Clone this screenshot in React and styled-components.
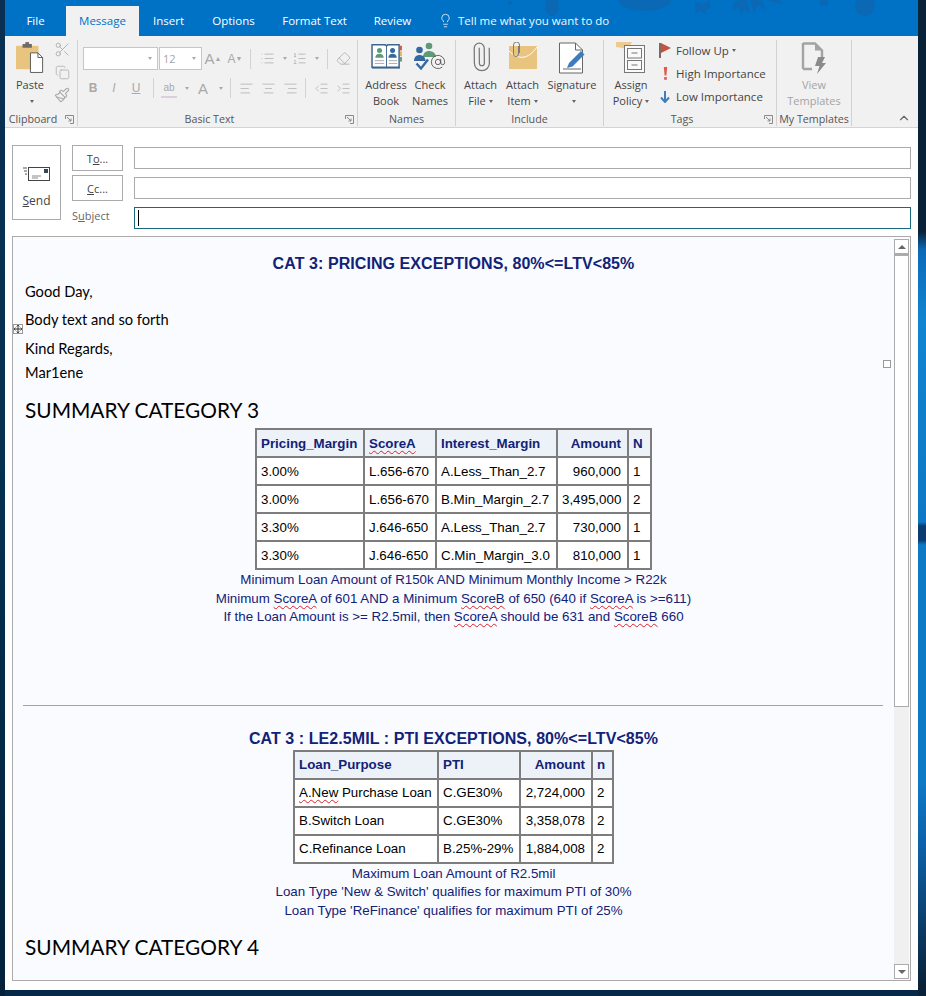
import React from 'react';
import styled, { createGlobalStyle } from 'styled-components';
import {
  AlignCenter, AlignLeft, AlignRight, AtSign, ChevronUp, Copy, Eraser, IndentDecrease,
  IndentIncrease, Lightbulb, List, ListOrdered, Paintbrush, Paperclip, Scissors,
} from 'lucide-react';

const GlobalStyle = createGlobalStyle`
  html, body { margin: 0; padding: 0; background: #06294a; }
`;

const UI_FONT = '"Open Sans", "Noto Sans", sans-serif';
const SAS_FONT = '"Liberation Sans", Arial, sans-serif';
const NAVY = '#112277';

const Screen = styled.div`
  display: flex;
  width: 926px;
  height: 996px;
  overflow: hidden;
  font-family: ${UI_FONT};
  background: #06294a;
`;

const LeftEdge = styled.div`
  width: 5px;
  background: linear-gradient(180deg, #0a2f52 0%, #04304f 50%, #03213b 100%);
`;

const RightEdge = styled.div`
  flex: 1;
  background: linear-gradient(
    180deg,
    #0a2238 0,
    #0a2238 232px,
    #0c6ab8 250px,
    #1185d0 320px,
    #0f78c4 522px,
    #0a3c70 526px,
    #0a3c70 540px,
    #0e7ac6 545px,
    #0e7ac6 780px,
    #0d5fa5 850px,
    #0a2238 985px
  );
`;

const Main = styled.div`
  width: 913px;
  height: 990px;
  display: flex;
  flex-direction: column;
  background: #fff;
`;

const TitleBar = styled.div`
  position: relative;
  height: 36px;
  display: flex;
  align-items: flex-end;
  background: #0072c6;
  overflow: hidden;
`;

const Doodles = styled.svg`
  position: absolute;
  left: 0;
  top: 0;
`;

const Tab = styled.div`
  position: relative;
  width: ${p => p.$w}px;
  height: 30px;
  box-sizing: border-box;
  padding-bottom: 2px;
  display: flex;
  align-items: center;
  justify-content: center;
  font-size: 11.5px;
  color: ${p => (p.$active ? '#0072c6' : '#fff')};
  background: ${p => (p.$active ? '#f1f1f1' : 'transparent')};
`;

const TellMe = styled.div`
  position: relative;
  height: 30px;
  box-sizing: border-box;
  padding-bottom: 2px;
  margin-left: 13px;
  display: flex;
  align-items: center;
  gap: 5px;
  font-size: 11.5px;
  color: #f0f8fe;
`;

const Ribbon = styled.div`
  height: 92px;
  box-sizing: border-box;
  display: flex;
  background: #f1f1f1;
  border-bottom: 1px solid #d4d4d4;
`;

const Group = styled.div`
  position: relative;
  width: ${p => p.$w}px;
  box-sizing: border-box;
  margin: 4px 0 1px;
  display: flex;
  flex-direction: column;
  border-right: 1px solid #d2d2d2;
`;

const GroupBody = styled.div`
  flex: 1;
  min-height: 0;
  display: flex;
  padding-left: ${p => p.$pl || 0}px;
`;

const GroupLabel = styled.div`
  height: 13px;
  padding-right: ${p => (p.$launcher ? 16 : 0)}px;
  text-align: center;
  font-size: 10.7px;
  line-height: 13px;
  color: #555;
`;

const Launcher = styled.svg`
  position: absolute;
  right: 3px;
  bottom: 2px;
`;

const BigButton = styled.div`
  width: ${p => p.$w}px;
  display: flex;
  flex-direction: column;
  align-items: center;
  text-align: center;
  font-size: 11px;
  line-height: 16px;
  color: ${p => (p.$muted ? '#a4a4a4' : '#444')};
`;

const BigIcon = styled.div`
  height: 37px;
  box-sizing: border-box;
  padding-top: 2px;
  display: flex;
  align-items: flex-start;
  justify-content: center;
`;

const Caret = styled.span`
  display: inline-block;
  width: 0;
  height: 0;
  margin-left: 3px;
  vertical-align: 2px;
  border-left: 2.5px solid transparent;
  border-right: 2.5px solid transparent;
  border-top: 3px solid ${p => p.$color || '#666'};
`;

const SmallStack = styled.div`
  width: 14px;
  padding-top: 1px;
  display: flex;
  flex-direction: column;
  align-items: center;
  gap: 7px;
  color: #a9a9a9;
`;

const ToolRows = styled.div`
  padding-top: 7px;
  display: flex;
  flex-direction: column;
  gap: 7px;
`;

const ToolRow = styled.div`
  display: flex;
  align-items: center;
  height: ${p => p.$h || 22}px;
`;

const Combo = styled.div`
  width: ${p => p.$w}px;
  height: 23px;
  margin-left: ${p => p.$ml || 0}px;
  box-sizing: border-box;
  padding: 0 5px 0 3px;
  display: flex;
  align-items: center;
  justify-content: space-between;
  background: #fff;
  border: 1px solid #c6c6c6;
  font-size: 11px;
  color: #a6a6a6;
`;

const Tool = styled.div`
  width: ${p => p.$w}px;
  height: 20px;
  box-sizing: border-box;
  display: flex;
  align-items: center;
  justify-content: center;
  color: ${p => p.$color || '#a9a9a9'};
  font-family: ${SAS_FONT};
  font-size: ${p => p.$fs || 12}px;
  font-weight: ${p => (p.$bold ? 700 : 400)};
  font-style: ${p => (p.$italic ? 'italic' : 'normal')};
  text-decoration: ${p => (p.$under ? 'underline' : 'none')};
  border-bottom: ${p => (p.$bar ? `2px solid ${p.$bar}` : 'none')};
`;

const ToolSep = styled.div`
  width: 1px;
  height: 20px;
  margin: 0 ${p => p.$mr}px 0 ${p => p.$ml}px;
  background: #d2d2d2;
`;

const TagList = styled.div`
  margin-top: -1px;
  display: flex;
  flex-direction: column;
`;

const TagRow = styled.div`
  height: 23px;
  display: flex;
  align-items: center;
  font-size: 11.5px;
  color: #444;
`;

const TagIcon = styled.div`
  width: 22px;
  display: flex;
  justify-content: center;
`;

const CheckIconWrap = styled.div`
  position: relative;
  display: flex;
`;

const AtMark = styled(AtSign)`
  position: absolute;
  right: 0;
  bottom: 3px;
  color: #555;
`;

const TiltedClip = styled(Paperclip)`
  color: #777;
  transform: rotate(-45deg);
`;

const TinyArrow = styled.sup`
  font-size: 7px;
`;

const Collapse = styled.div`
  flex: 1;
  display: flex;
  align-items: flex-end;
  justify-content: flex-end;
  padding: 0 7px 2px 0;
  color: #666;
`;

const Compose = styled.div`
  flex: 1;
  min-height: 0;
  display: flex;
  flex-direction: column;
  padding: 17px 7px 9px 7px;
`;

const Header = styled.div`
  display: grid;
  grid-template-columns: 49px 51px 1fr;
  grid-template-rows: repeat(3, 26px);
  column-gap: 11px;
  row-gap: 4px;
  height: 86px;
`;

const SendButton = styled.div`
  grid-row: 1 / 4;
  height: 75px;
  box-sizing: border-box;
  border: 1px solid #ababab;
  display: flex;
  flex-direction: column;
  align-items: center;
  padding-top: 20px;
  gap: 11px;
  font-size: 12px;
  color: #444;
`;

const AddressButton = styled.div`
  box-sizing: border-box;
  border: 1px solid #ababab;
  display: flex;
  align-items: center;
  justify-content: center;
  font-size: 11px;
  color: #444;
`;

const SubjectLabel = styled.div`
  display: flex;
  align-items: center;
  padding-bottom: 5px;
  font-size: 11px;
  color: #666;
`;

const Field = styled.div`
  height: 22px;
  align-self: center;
  box-sizing: border-box;
  display: flex;
  align-items: center;
  padding-left: 3px;
  background: #fff;
  border: 1px solid ${p => (p.$focus ? '#17697f' : '#ababab')};
`;

const TextCaret = styled.div`
  width: 1px;
  height: 16px;
  background: #000;
`;

const Body = styled.div`
  position: relative;
  flex: 1;
  min-height: 0;
  margin-top: 5px;
  display: flex;
  overflow: hidden;
  background: #fafbff;
  border: 1px solid #ababab;
`;

const Content = styled.div`
  flex: 1;
  min-width: 0;
  padding: 17px 0 0;
`;

const ReportTitle = styled.div`
  text-align: center;
  font-family: ${SAS_FONT};
  font-size: 16px;
  font-weight: 700;
  line-height: 20px;
  letter-spacing: 0.07px;
  color: ${NAVY};
`;

const Para = styled.div`
  margin: ${p => p.$mt}px 0 0 12px;
  font-family: Lato, "Open Sans", sans-serif;
  font-size: 14.67px;
  line-height: 20px;
  color: #000;
`;

const SummaryHeading = styled.div`
  margin: ${p => p.$mt}px 0 0 12px;
  font-family: Lato, "Open Sans", sans-serif;
  font-size: 20.85px;
  line-height: 30px;
  color: #000;
`;

const Report = styled.table`
  width: ${p => p.$w}px;
  margin: ${p => p.$mt}px auto 0;
  table-layout: fixed;
  border-collapse: collapse;
  font-family: ${SAS_FONT};
  font-size: 13.33px;
  background: #fff;
`;

const HeadCell = styled.th`
  width: ${p => p.$w}px;
  height: 28px;
  box-sizing: border-box;
  padding: 0 6px 0 4px;
  border: 2px solid #7d7d7d;
  background: #edf2f9;
  color: ${NAVY};
  font-weight: 700;
  text-align: ${p => (p.$right ? 'right' : 'left')};
  white-space: nowrap;
`;

const DataCell = styled.td`
  height: 28px;
  box-sizing: border-box;
  padding: 0 6px 0 4px;
  border: 2px solid #7d7d7d;
  color: #000;
  text-align: ${p => (p.$right ? 'right' : 'left')};
  white-space: nowrap;
`;

const Notes = styled.div`
  margin-top: 1px;
  text-align: center;
  font-family: ${SAS_FONT};
  font-size: 13.33px;
  line-height: 18.5px;
  color: ${NAVY};
`;

const Spell = styled.span`
  text-decoration: underline wavy #d9222a 1px;
  text-underline-offset: 2px;
`;

const Rule = styled.div`
  height: 1px;
  margin: 78px 11px 23px 10px;
  background: #a3a3ad;
`;

const MoveHandle = styled.div`
  position: absolute;
  left: 0;
  top: 87px;
  width: 10px;
  height: 10px;
  box-sizing: border-box;
  display: flex;
  align-items: center;
  justify-content: center;
  background: #fff;
  border: 1px solid #9a9a9a;
`;

const ResizeHandle = styled.div`
  position: absolute;
  left: 870px;
  top: 123px;
  width: 8px;
  height: 8px;
  box-sizing: border-box;
  background: #fff;
  border: 1px solid #9a9a9a;
`;

const Scroller = styled.div`
  width: 15px;
  margin: 2px 1px 1px 0;
  display: flex;
  flex-direction: column;
  background: #f0f0f0;
`;

const ScrollButton = styled.div`
  height: 15px;
  box-sizing: border-box;
  display: flex;
  align-items: center;
  justify-content: center;
  background: #fff;
  border: 1px solid #ababab;
`;

const ScrollThumb = styled.div`
  height: 453px;
  box-sizing: border-box;
  background: #fff;
  border: 1px solid #ababab;
  border-top-width: 2px;
`;

const ScrollTrack = styled.div`
  flex: 1;
`;

const Arrow = styled.div`
  width: 0;
  height: 0;
  border-left: 4px solid transparent;
  border-right: 4px solid transparent;
  ${p => (p.$down ? 'border-top: 4px solid #666;' : 'border-bottom: 4px solid #666;')}
`;

const PasteIcon = () => (
  <svg width="28" height="32" viewBox="0 0 30 34">
    <rect x="0" y="4" width="24" height="25" fill="#e8c47f" />
    <rect x="7" y="2" width="10" height="4" fill="#6f6a66" />
    <rect x="10" y="0" width="4" height="3" fill="#6f6a66" />
    <path d="M15.5 11.5h8l5 5v16h-13z" fill="#fff" stroke="#555" />
    <path d="M23.5 11.5v5h5" fill="none" stroke="#555" />
  </svg>
);

const AddressBookIcon = () => (
  <svg width="33" height="28" viewBox="0 0 33 30">
    <path d="M1 3h14l1.500 1 1.500-1h12v24H1z" fill="#fff" stroke="#3f668f" strokeWidth="1.600" />
    <path d="M1 27h30v1.500H1z" fill="#3f668f" />
    <path d="M16.500 4v23" stroke="#3f668f" />
    <circle cx="9" cy="9" r="2.700" fill="#5e9a78" />
    <path d="M4.500 17c0-3 2-4.500 4.500-4.500s4.500 1.500 4.500 4.500z" fill="#5e9a78" />
    <circle cx="23" cy="9" r="2.700" fill="#34689f" />
    <path d="M18.500 17c0-3 2-4.500 4.500-4.500s4.500 1.500 4.500 4.500z" fill="#34689f" />
    <path d="M4 20h10M4 23h10M19 20h9M19 23h9" stroke="#a7a7a7" />
    <rect x="31" y="4" width="2" height="5" fill="#c9574a" />
    <rect x="31" y="10" width="2" height="5" fill="#e3b457" />
    <rect x="31" y="16" width="2" height="5" fill="#5e9a78" />
  </svg>
);

const CheckNamesIcon = () => (
  <svg width="32" height="31" viewBox="0 0 32 31">
    <circle cx="15" cy="4" r="3.300" fill="#5e9a78" />
    <path d="M9 15c0-4 3-6 6-6s7 2 7 6z" fill="#5e9a78" />
    <circle cx="5.500" cy="8" r="3.300" fill="#34689f" />
    <path d="M0 19c0-4 2.500-6 5.500-6s6 2 6 6z" fill="#34689f" />
    <path d="M2.500 21.500l4.500 5 7-9" fill="none" stroke="#34689f" strokeWidth="2.400" />
  </svg>
);

const EnvelopeClipIcon = () => (
  <svg width="30" height="28" viewBox="0 0 30 28">
    <rect x="1" y="4" width="28" height="23" fill="#e8c47f" />
    <path d="M1 9c9 9 19 9 28-4" fill="none" stroke="#fff" strokeWidth="1" />
    <path d="M9.500 4v8a2.500 2.500 0 0 1-5 0V3a3 3 0 0 1 6 0v8" fill="none" stroke="#7b7b7b" transform="translate(1 0)" />
  </svg>
);

const SignatureIcon = () => (
  <svg width="30" height="32" viewBox="0 0 30 32">
    <path d="M2.500 1h16l7 7v23h-23z" fill="#fff" stroke="#666" />
    <path d="M18.500 1v7h7" fill="none" stroke="#666" />
    <path d="M6 27h18" stroke="#666" />
    <path d="M10 26l2-5L24 9l3.500 3.500-12 12z" fill="#3f7cbd" />
  </svg>
);

const CabinetIcon = () => (
  <svg width="30" height="32" viewBox="0 0 30 32">
    <path d="M0 0h16l-4 7-12-2z" fill="#ebcb8f" />
    <rect x="8.500" y="3.500" width="20" height="27" fill="#fafafa" stroke="#777" />
    <rect x="11.500" y="6.500" width="14" height="9.500" fill="none" stroke="#777" />
    <rect x="11.500" y="18.500" width="14" height="9" fill="none" stroke="#777" />
    <path d="M15.500 11h6M15.500 23h6" stroke="#777" />
  </svg>
);

const TemplatesIcon = () => (
  <svg width="26" height="32" viewBox="0 0 26 32">
    <path d="M2 1.500h12l7 7v7M11 27H2z" fill="none" stroke="#a3a3a3" strokeWidth="2.400" />
    <path d="M2 1v26" stroke="#a3a3a3" strokeWidth="2.400" />
    <path d="M14 1.500v7h7z" fill="#a3a3a3" />
    <path d="M17 15h7l-3 6h4l-9 11 2.500-8H14z" fill="#8a8a8a" />
  </svg>
);

const SendIcon = () => (
  <svg width="28" height="15" viewBox="0 0 28 15">
    <rect x="5.500" y="1.500" width="21" height="13" fill="#fff" stroke="#444" />
    <rect x="21" y="3" width="4" height="4" fill="#33475b" />
    <path d="M9 10h9M9 12h6" stroke="#888" />
    <path d="M0 2h4M1 5h3M2 8h2" stroke="#555" />
  </svg>
);

const FlagIcon = () => (
  <svg width="12" height="15" viewBox="0 0 12 15">
    <rect x="0" y="0" width="2" height="15" fill="#7a6a64" />
    <path d="M2 0l10 5-10 5z" fill="#c9503c" />
  </svg>
);

const HighIcon = () => (
  <svg width="5" height="13" viewBox="0 0 5 13">
    <path d="M.8 0h3.400l-.8 8.500H1.600z" fill="#e05a4e" />
    <rect x="1.200" y="10" width="2.600" height="2.800" fill="#e05a4e" />
  </svg>
);

const LowIcon = () => (
  <svg width="10" height="12" viewBox="0 0 10 12">
    <path d="M5 0v10M1 6.500L5 11l4-4.500" fill="none" stroke="#3f7cbd" strokeWidth="2" />
  </svg>
);

const LauncherMark = () => (
  <Launcher width="9" height="9" viewBox="0 0 9 9">
    <path d="M.5 4V.5H8.500V8.500H5" fill="none" stroke="#8a8a8a" />
    <path d="M2 2l4 4M6 3.500V6H3.500" fill="none" stroke="#8a8a8a" />
  </Launcher>
);

const MoveGlyph = () => (
  <svg width="8" height="8" viewBox="0 0 8 8">
    <path d="M4 0v8M0 4h8" stroke="#333" />
    <path d="M2.500 1.500L4 0l1.500 1.500M2.500 6.500L4 8l1.500-1.500M1.500 2.500L0 4l1.500 1.500M6.500 2.500L8 4 6.500 5.500" fill="none" stroke="#333" strokeWidth="0.800" />
  </svg>
);

const TitleDoodles = () => (
  <Doodles width="913" height="36" viewBox="0 0 913 36">
    <g fill="#0a68b4">
      <ellipse cx="640" cy="0" rx="26" ry="11" />
      <ellipse cx="547" cy="6" rx="7" ry="10" />
      <circle cx="505" cy="3" r="2" />
      <ellipse cx="860" cy="6" rx="10" ry="10" />
      <circle cx="819" cy="2" r="4" />
      <path d="M728 2l8-2 6 0 3 14-5-5-4 6-2-8-6 3zM745 0h12l4 10-8-5-4 8z" />
      <path d="M762 0h12l5 4-8-1z" />
      <path d="M690 1l8 4 6-5 2 8-6 2 1 5-6-4-5 3z" />
    </g>
  </Doodles>
);

const tableOne = {
  rows: [
    ['3.00%', 'L.656-670', 'A.Less_Than_2.7', '960,000', '1'],
    ['3.00%', 'L.656-670', 'B.Min_Margin_2.7', '3,495,000', '2'],
    ['3.30%', 'J.646-650', 'A.Less_Than_2.7', '730,000', '1'],
    ['3.30%', 'J.646-650', 'C.Min_Margin_3.0', '810,000', '1'],
  ],
};

const tableTwo = {
  rows: [
    [<><Spell>A.New</Spell> Purchase Loan</>, 'C.GE30%', '2,724,000', '2'],
    ['B.Switch Loan', 'C.GE30%', '3,358,078', '2'],
    ['C.Refinance Loan', 'B.25%-29%', '1,884,008', '2'],
  ],
};

export default function App() {
  return (
    <>
      <GlobalStyle />
      <Screen>
        <LeftEdge />
        <Main>
          <TitleBar>
            <TitleDoodles />
            <Tab $w={61}>File</Tab>
            <Tab $w={73} $active>Message</Tab>
            <Tab $w={59}>Insert</Tab>
            <Tab $w={71}>Options</Tab>
            <Tab $w={91}>Format Text</Tab>
            <Tab $w={65}>Review</Tab>
            <TellMe>
              <Lightbulb size={15} strokeWidth={1.2} color="#fff" />
              Tell me what you want to do
            </TellMe>
          </TitleBar>

          <Ribbon>
            <Group $w={73}>
              <GroupBody>
                <BigButton $w={50}>
                  <BigIcon><PasteIcon /></BigIcon>
                  <span>Paste</span>
                  <span><Caret /></span>
                </BigButton>
                <SmallStack>
                  <Scissors size={17} strokeWidth={1.2} />
                  <Copy size={15} strokeWidth={1.2} />
                  <Paintbrush size={16} strokeWidth={1.6} />
                </SmallStack>
              </GroupBody>
              <GroupLabel $launcher>Clipboard</GroupLabel>
              <LauncherMark />
            </Group>

            <Group $w={280}>
              <GroupBody $pl={5}>
                <ToolRows>
                  <ToolRow $h={23}>
                    <Combo $w={75}><span /><Caret $color="#aaa" /></Combo>
                    <Combo $w={43} $ml={1}>12<Caret $color="#aaa" /></Combo>
                    <Tool $w={22} $fs={15}>A<TinyArrow>▲</TinyArrow></Tool>
                    <Tool $w={22} $fs={12}>A<TinyArrow>▼</TinyArrow></Tool>
                    <ToolSep $ml={4} $mr={8} />
                    <Tool $w={16}><List size={15} strokeWidth={1.2} /></Tool>
                    <Tool $w={16}><Caret $color="#aaa" /></Tool>
                    <Tool $w={16}><ListOrdered size={15} strokeWidth={1.2} /></Tool>
                    <Tool $w={16}><Caret $color="#aaa" /></Tool>
                    <ToolSep $ml={4} $mr={4} />
                    <Tool $w={22}><Eraser size={15} strokeWidth={1.3} /></Tool>
                  </ToolRow>
                  <ToolRow>
                    <Tool $w={20} $bold>B</Tool>
                    <Tool $w={22} $italic>I</Tool>
                    <Tool $w={22} $under>U</Tool>
                    <ToolSep $ml={6} $mr={7} />
                    <Tool $w={16} $fs={10} $bar="#dccfdc">ab</Tool>
                    <Tool $w={16}><Caret $color="#aaa" /></Tool>
                    <Tool $w={20} $fs={15}>A</Tool>
                    <Tool $w={12}><Caret $color="#aaa" /></Tool>
                    <ToolSep $ml={5} $mr={4} />
                    <Tool $w={22}><AlignLeft size={15} strokeWidth={1.1} /></Tool>
                    <Tool $w={22}><AlignCenter size={15} strokeWidth={1.1} /></Tool>
                    <Tool $w={22}><AlignRight size={15} strokeWidth={1.1} /></Tool>
                    <ToolSep $ml={4} $mr={4} />
                    <Tool $w={22}><IndentDecrease size={15} strokeWidth={1.1} /></Tool>
                    <Tool $w={22}><IndentIncrease size={15} strokeWidth={1.1} /></Tool>
                  </ToolRow>
                </ToolRows>
              </GroupBody>
              <GroupLabel $launcher>Basic Text</GroupLabel>
              <LauncherMark />
            </Group>

            <Group $w={98}>
              <GroupBody $pl={6}>
                <BigButton $w={44}>
                  <BigIcon><AddressBookIcon /></BigIcon>
                  <span>Address</span>
                  <span>Book</span>
                </BigButton>
                <BigButton $w={44}>
                  <BigIcon>
                    <CheckIconWrap>
                      <CheckNamesIcon />
                      <AtMark size={16} strokeWidth={1.3} />
                    </CheckIconWrap>
                  </BigIcon>
                  <span>Check</span>
                  <span>Names</span>
                </BigButton>
              </GroupBody>
              <GroupLabel>Names</GroupLabel>
            </Group>

            <Group $w={148}>
              <GroupBody $pl={3}>
                <BigButton $w={43}>
                  <BigIcon><TiltedClip size={30} strokeWidth={1} /></BigIcon>
                  <span>Attach</span>
                  <span>File<Caret /></span>
                </BigButton>
                <BigButton $w={41}>
                  <BigIcon><EnvelopeClipIcon /></BigIcon>
                  <span>Attach</span>
                  <span>Item<Caret /></span>
                </BigButton>
                <BigButton $w={58}>
                  <BigIcon><SignatureIcon /></BigIcon>
                  <span>Signature</span>
                  <span><Caret /></span>
                </BigButton>
              </GroupBody>
              <GroupLabel>Include</GroupLabel>
            </Group>

            <Group $w={173}>
              <GroupBody $pl={4}>
                <BigButton $w={46}>
                  <BigIcon><CabinetIcon /></BigIcon>
                  <span>Assign</span>
                  <span>Policy<Caret /></span>
                </BigButton>
                <TagList>
                  <TagRow><TagIcon><FlagIcon /></TagIcon>Follow Up<Caret /></TagRow>
                  <TagRow><TagIcon><HighIcon /></TagIcon>High Importance</TagRow>
                  <TagRow><TagIcon><LowIcon /></TagIcon>Low Importance</TagRow>
                </TagList>
              </GroupBody>
              <GroupLabel $launcher>Tags</GroupLabel>
              <LauncherMark />
            </Group>

            <Group $w={75}>
              <GroupBody>
                <BigButton $w={74} $muted>
                  <BigIcon><TemplatesIcon /></BigIcon>
                  <span>View</span>
                  <span>Templates</span>
                </BigButton>
              </GroupBody>
              <GroupLabel>My Templates</GroupLabel>
            </Group>

            <Collapse><ChevronUp size={14} strokeWidth={2} /></Collapse>
          </Ribbon>

          <Compose>
            <Header>
              <SendButton>
                <SendIcon />
                <span><u>S</u>end</span>
              </SendButton>
              <AddressButton>T<u>o</u>...</AddressButton>
              <Field />
              <AddressButton><u>C</u>c...</AddressButton>
              <Field />
              <SubjectLabel>S<u>u</u>bject</SubjectLabel>
              <Field $focus><TextCaret /></Field>
            </Header>

            <Body>
              <Content>
                <ReportTitle>CAT 3: PRICING EXCEPTIONS, 80%&lt;=LTV&lt;85%</ReportTitle>
                <Para $mt={8}>Good Day,</Para>
                <Para $mt={8}>Body text and so forth</Para>
                <Para $mt={9}>Kind Regards,</Para>
                <Para $mt={4}>Mar1ene</Para>
                <SummaryHeading $mt={12}>SUMMARY CATEGORY 3</SummaryHeading>

                <Report $w={396} $mt={3}>
                  <thead>
                    <tr>
                      <HeadCell $w={108}>Pricing_Margin</HeadCell>
                      <HeadCell $w={72}><Spell>ScoreA</Spell></HeadCell>
                      <HeadCell $w={121}>Interest_Margin</HeadCell>
                      <HeadCell $w={71} $right>Amount</HeadCell>
                      <HeadCell $w={23}>N</HeadCell>
                    </tr>
                  </thead>
                  <tbody>
                    {tableOne.rows.map((row, i) => (
                      <tr key={i}>
                        <DataCell>{row[0]}</DataCell>
                        <DataCell>{row[1]}</DataCell>
                        <DataCell>{row[2]}</DataCell>
                        <DataCell $right>{row[3]}</DataCell>
                        <DataCell>{row[4]}</DataCell>
                      </tr>
                    ))}
                  </tbody>
                </Report>
                <Notes>
                  <div>Minimum Loan Amount of R150k AND Minimum Monthly Income &gt; R22k</div>
                  <div>Minimum <Spell>ScoreA</Spell> of 601 AND a Minimum <Spell>ScoreB</Spell> of 650 (640 if <Spell>ScoreA</Spell> is &gt;=611)</div>
                  <div>If the Loan Amount is &gt;= R2.5mil, then <Spell>ScoreA</Spell> should be 631 and <Spell>ScoreB</Spell> 660</div>
                </Notes>

                <Rule />

                <ReportTitle>CAT 3 : LE2.5MIL : PTI EXCEPTIONS, 80%&lt;=LTV&lt;85%</ReportTitle>
                <Report $w={320} $mt={1}>
                  <thead>
                    <tr>
                      <HeadCell $w={144}>Loan_Purpose</HeadCell>
                      <HeadCell $w={82}>PTI</HeadCell>
                      <HeadCell $w={72} $right>Amount</HeadCell>
                      <HeadCell $w={21}>n</HeadCell>
                    </tr>
                  </thead>
                  <tbody>
                    {tableTwo.rows.map((row, i) => (
                      <tr key={i}>
                        <DataCell>{row[0]}</DataCell>
                        <DataCell>{row[1]}</DataCell>
                        <DataCell $right>{row[2]}</DataCell>
                        <DataCell>{row[3]}</DataCell>
                      </tr>
                    ))}
                  </tbody>
                </Report>
                <Notes>
                  <div>Maximum Loan Amount of R2.5mil</div>
                  <div>Loan Type 'New &amp; Switch' qualifies for maximum PTI of 30%</div>
                  <div>Loan Type 'ReFinance' qualifies for maximum PTI of 25%</div>
                </Notes>
                <SummaryHeading $mt={12}>SUMMARY CATEGORY 4</SummaryHeading>
              </Content>

              <Scroller>
                <ScrollButton><Arrow /></ScrollButton>
                <ScrollThumb />
                <ScrollTrack />
                <ScrollButton><Arrow $down /></ScrollButton>
              </Scroller>

              <MoveHandle><MoveGlyph /></MoveHandle>
              <ResizeHandle />
            </Body>
          </Compose>
        </Main>
        <RightEdge />
      </Screen>
    </>
  );
}
